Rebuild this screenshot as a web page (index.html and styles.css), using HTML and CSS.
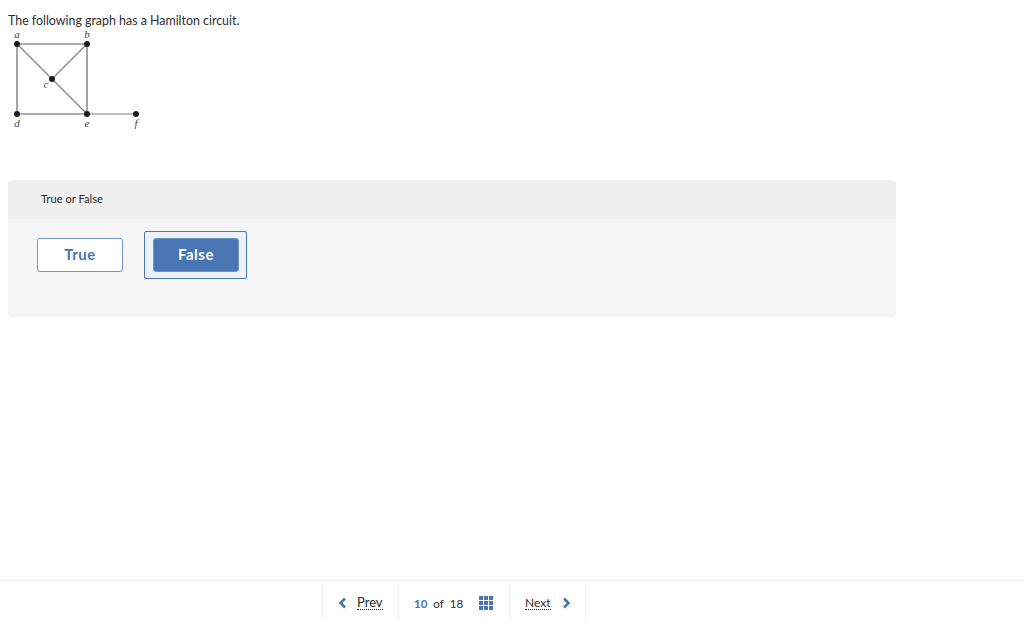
FILE: index.html
```html
<!DOCTYPE html>
<html lang="en">
<head>
<meta charset="utf-8">
<title>Question 10 of 18</title>
<link rel="stylesheet" href="styles.css">
</head>
<body>
<main class="content">
  <p class="prompt">The following graph has a Hamilton circuit.</p>
  <svg class="graph" width="150" height="108" viewBox="8 -4 150 108" role="img" aria-label="Graph with vertices a to f">
    <g class="edges">
      <path class="dark" d="M17 14H87V84H17Z"/>
      <path d="M17 14L87 84"/>
      <path d="M87 14L52 49"/>
      <path d="M87 84H136"/>
    </g>
    <g class="nodes">
      <circle cx="17" cy="14" r="3"/>
      <circle cx="87" cy="14" r="3"/>
      <circle cx="52" cy="49" r="3"/>
      <circle cx="17" cy="84" r="3"/>
      <circle cx="87" cy="84" r="3"/>
      <circle cx="136" cy="84" r="3"/>
    </g>
    <g class="labels">
      <text x="17" y="8">a</text>
      <text x="87" y="8">b</text>
      <text x="46" y="58">c</text>
      <text x="17" y="97">d</text>
      <text x="87" y="97">e</text>
      <text x="136" y="97">f</text>
    </g>
  </svg>
  <section class="question">
    <header class="question-head">True or False</header>
    <div class="choices">
      <div class="choice-frame"><button class="choice">True</button></div>
      <div class="choice-frame selected"><button class="choice active">False</button></div>
    </div>
  </section>
</main>
<footer class="footer">
  <nav class="pager">
    <a class="pager-cell prev">
      <svg class="chev" width="9" height="12" viewBox="0 0 9 12"><path d="M7 1.5L2.5 6L7 10.5"/></svg>
      <span class="link">Prev</span>
    </a>
    <div class="pager-cell count">
      <b class="current">10</b><span class="of">of</span><span>18</span>
      <svg class="grid" width="14" height="14" viewBox="0 0 14 14">
        <path d="M0 0h4v4H0zM5 0h4v4H5zM10 0h4v4h-4zM0 5h4v4H0zM5 5h4v4H5zM10 5h4v4h-4zM0 10h4v4H0zM5 10h4v4H5zM10 10h4v4h-4z"/>
      </svg>
    </div>
    <a class="pager-cell next">
      <span class="link">Next</span>
      <svg class="chev" width="9" height="12" viewBox="0 0 9 12"><path d="M2 1.5L6.5 6L2 10.5"/></svg>
    </a>
  </nav>
</footer>
</body>
</html>
```
FILE: styles.css
```css
* { box-sizing: border-box; }
html, body { height: 100%; }
body {
  margin: 0;
  height: 626px;
  display: flex;
  flex-direction: column;
  overflow: hidden;
  background: #fff;
  color: #2d2d2d;
  font-family: "Lato", "Liberation Sans", sans-serif;
}
.content { flex: 1; padding: 13px 8px 0; }
.prompt { margin: 0; font-size: 12.4px; line-height: 15px; }
.graph { display: block; margin-top: -2px; margin-bottom: 46px; }
.edges path { fill: none; stroke: #808080; stroke-width: 1.1; }
.edges .dark { stroke: #5c5c5c; }
.nodes circle { fill: #1c1c1c; }
.labels text {
  font-family: "Liberation Serif", serif;
  font-style: italic;
  font-size: 11px;
  fill: #444;
  text-anchor: middle;
}
.question { width: 888px; height: 137px; background: #f5f5f5; border-radius: 4px; overflow: hidden; }
.question-head { height: 39px; padding-left: 33px; background: #f0f0f0; font-size: 11.2px; line-height: 37px; }
.choices { display: flex; align-items: flex-start; gap: 21px; padding: 12px 0 0 29px; }
.choice-frame { margin-top: 7px; }
.choice-frame.selected {
  margin-top: 0;
  padding: 6px 7px 6px 8px;
  background: #ebf2fa;
  border: 1px solid #4a76b6;
  border-radius: 2px;
}
.choice {
  display: block;
  width: 86px;
  height: 34px;
  padding: 0 0 2px;
  background: #fff;
  border: 1px solid #6f96cb;
  border-radius: 3px;
  color: #4a74b4;
  font: 700 15px "Lato", "Liberation Sans", sans-serif;
  letter-spacing: 0.5px;
}
.choice.active { background: #4a75b5; color: #fff; }
.footer { height: 46px; flex: none; border-top: 1px solid #f0f0f0; padding: 3px 0 0 322px; }
.pager { display: flex; width: 264px; height: 36px; border-left: 1px solid #f3f3f3; border-right: 1px solid #f3f3f3; font-size: 12px; }
.pager-cell { display: flex; align-items: center; padding-top: 2px; }
.prev { width: 75px; padding-left: 15px; gap: 10px; }
.prev .link { font-size: 13px; }
.count { width: 112px; padding-left: 15px; border-left: 1px solid #f0f0f0; border-right: 1px solid #f0f0f0; font-size: 11.5px; }
.next { width: 75px; padding-left: 15px; gap: 11px; }
.chev path { fill: none; stroke: #4a75b5; stroke-width: 2.6; }
.link { color: #2d2d2d; border-bottom: 1px dotted #333; line-height: 13px; }
.current { color: #4a75b5; font-weight: 700; }
.of { margin: 0 6px; }
.grid { margin-left: 16px; }
.grid path { fill: #4a75b5; }
```
